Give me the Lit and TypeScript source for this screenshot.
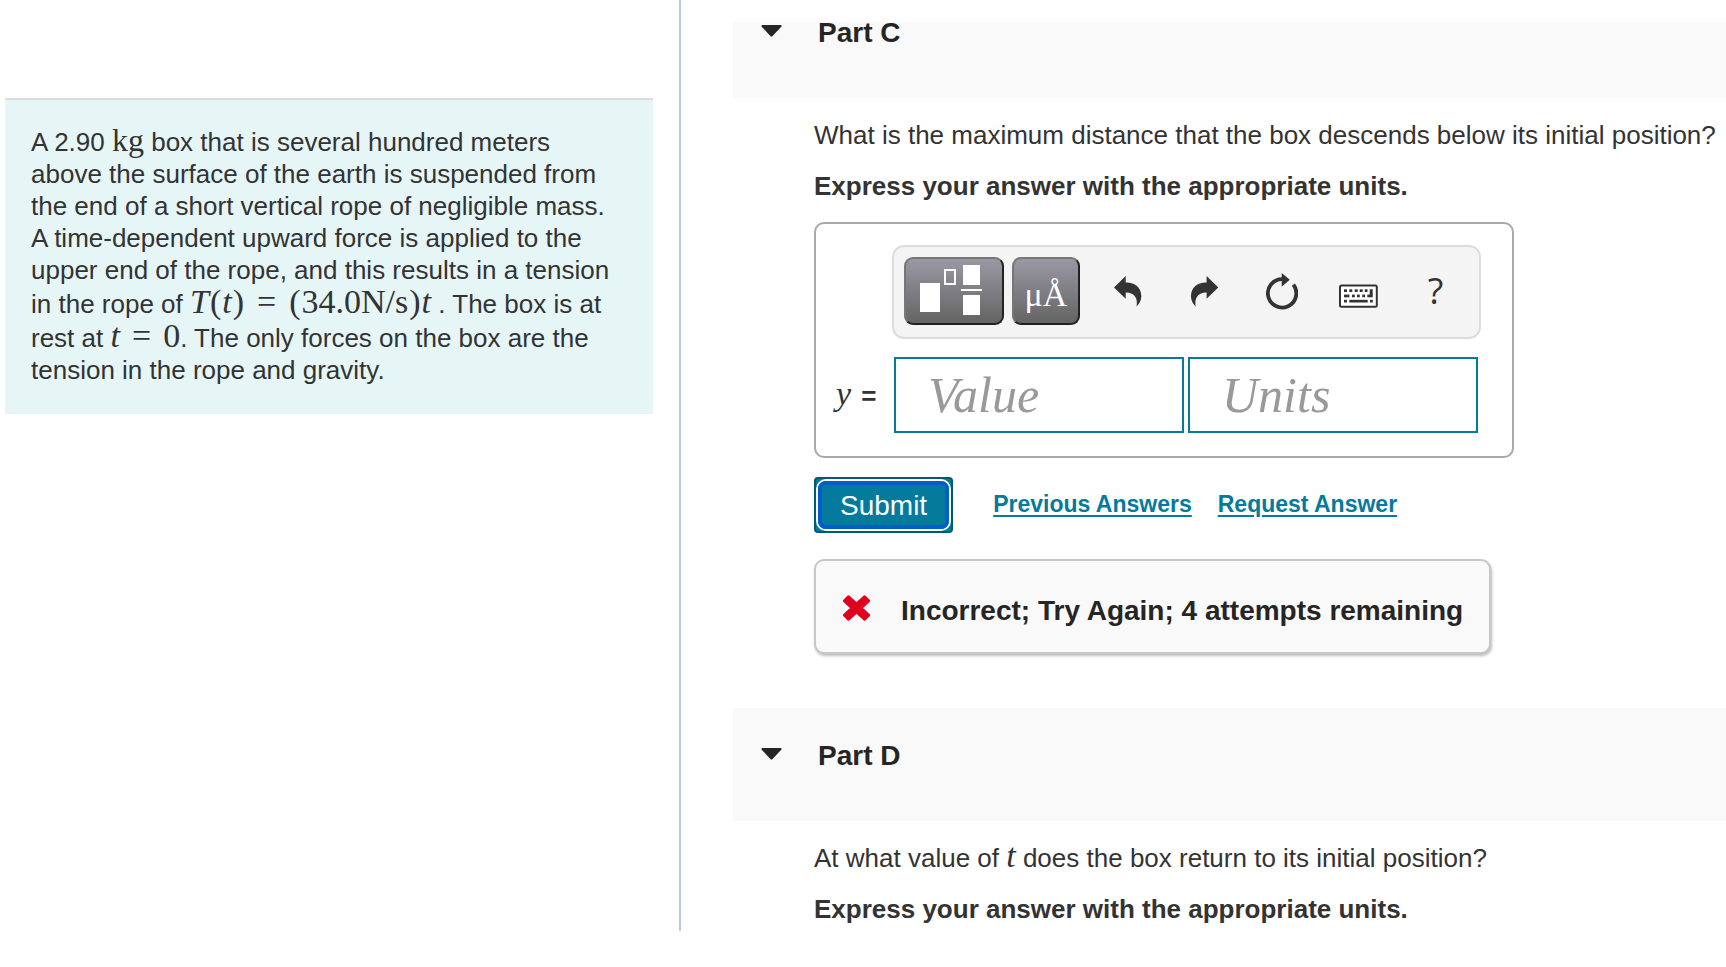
import { LitElement, html, css, svg } from "lit";
import { customElement, property } from "lit/decorators.js";

const undoIcon = html`<svg width="28" height="31" viewBox="0 0 28 31" aria-hidden="true">
  <path d="M0 11.5L11.7 0V6.5C20 6 27.3 11 27.3 20C27.3 25 25 28 22.5 30.5C24 23.5 21.5 16.5 11.7 16.5V22.8Z" />
</svg>`;

const redoIcon = html`<svg width="28" height="31" viewBox="0 0 28 31" aria-hidden="true">
  <path d="M27.3 11.5L15.6 0V6.5C7.3 6 0 11 0 20C0 25 2.3 28 4.8 30.5C3.3 23.5 5.8 16.5 15.6 16.5V22.8Z" />
</svg>`;

const resetIcon = html`<svg width="32" height="37" viewBox="0 0 32 37" aria-hidden="true">
  <path d="M27.4 11.7A14.2 14.2 0 1 1 16 6.1" fill="none" stroke="currentColor" stroke-width="3.8" />
  <path d="M15.7 0L23.8 6.8L15.7 13.7Z" />
</svg>`;

const keys: number[][] = [
  [5, 16.3, 3, 2.7], [10.3, 16.3, 3, 2.7], [15.7, 16.3, 3, 2.7], [20.7, 16.3, 3, 2.7], [25.7, 16.3, 2.8, 2.7],
  [5, 21.6, 5.4, 2.7], [13, 21.6, 2.8, 2.7], [18, 21.6, 2.8, 2.7], [23.3, 21.6, 2.8, 2.7], [28.3, 21.6, 5.4, 2.7],
  [30.7, 16.3, 3, 6],
  [5, 26.8, 3, 2.7], [10.3, 26.8, 18.4, 2.7], [31, 26.8, 2.8, 2.7],
];

const keyboardIcon = html`<svg width="39" height="36" viewBox="0 0 39 36" aria-hidden="true">
  <rect x="1" y="12.4" width="36.8" height="21.4" rx="1.5" fill="#fff" stroke="currentColor" stroke-width="2" />
  ${keys.map(([x, y, w, h]) => svg`<rect x=${x} y=${y} width=${w} height=${h} />`)}
</svg>`;

const templateIcon = html`<svg width="64" height="52" viewBox="0 0 64 52" aria-hidden="true">
  <rect x="1" y="18" width="20" height="29" />
  <rect x="26" y="5" width="10" height="14" fill="none" stroke="currentColor" stroke-width="2" />
  <rect x="44" y="0" width="17" height="20" />
  <rect x="42" y="24" width="21" height="2" />
  <rect x="44" y="30" width="17" height="20" />
</svg>`;

const wrongIcon = html`<svg width="28" height="26" viewBox="0 0 28 26" aria-hidden="true">
  <path d="M5.5 1.8L13.5 9L21.5 1.8L25.5 5.8L18 13L25.5 20.2L21.5 24.2L13.5 17L5.5 24.2L1.5 20.2L9 13L1.5 5.8Z"
    stroke="currentColor" stroke-width="3" stroke-linejoin="round" fill="currentColor" />
</svg>`;

@customElement("part-header")
class PartHeader extends LitElement {
  @property() label = "";

  static styles = css`
    :host { display: block; background: #f9f9f9; }
    h2 { margin: 0; font-size: 28px; line-height: 32px; font-weight: bold; }
    button {
      display: flex; align-items: center; gap: 36px; width: 100%; height: 113px;
      padding: 0 0 18px 28px; border: 0; background: none; color: #252525;
      font: inherit; text-align: left; cursor: pointer;
    }
    svg { fill: currentColor; margin-bottom: 3px; }
  `;

  render() {
    return html`<h2><button aria-expanded="true">
      <svg width="21" height="12" viewBox="0 0 21 12" aria-hidden="true">
        <path d="M1.2 0H19.8Q21.3 .6 20.2 1.8L11.6 11Q10.5 12 9.4 11L.8 1.8Q-.3 .6 1.2 0Z" />
      </svg>${this.label}</button></h2>`;
  }
}

@customElement("answer-editor")
class AnswerEditor extends LitElement {
  static styles = css`
    * { box-sizing: border-box; }
    :host {
      display: grid; grid-template-columns: 76px auto; width: fit-content; box-sizing: border-box;
      padding: 21px 31px 23px 0; border: 2px solid #a9a9a9; border-radius: 10px; row-gap: 18px;
    }
    button { cursor: pointer; }
    svg { fill: currentColor; display: block; }
    .tools {
      grid-column: 2; display: flex; align-items: center; height: 94px; padding: 0 6px 2px 10px;
      border: 2px solid #dcdcdc; border-radius: 12px; background: #f4f4f4;
    }
    .dark {
      display: flex; align-items: center; justify-content: center;
      height: 68px; width: 68px; margin-right: 8px; padding: 8px 0 0;
      border: 2px solid; border-color: #777 #222 #222 #777; border-radius: 9px;
      background: linear-gradient(#9a98a3, #646464); color: #fff;
      font: 34px/44px "Liberation Serif", serif;
    }
    .wide { width: 100px; padding: 0 7px 0 0; }
    .flat {
      display: flex; align-items: center; justify-content: center;
      width: 77px; height: 68px; padding: 0 0 0 2px; border: 0; background: none; color: #333;
      font: 36px/44px "Open Sans", sans-serif;
    }
    .name { align-self: center; padding-left: 20px; font: bold 26px/32px "Liberation Sans", sans-serif; color: #333; }
    .name i { margin-right: 3px; font: italic 34px/32px "Liberation Serif", serif; }
    .fields { display: flex; gap: 4px; padding-left: 2px; }
    input {
      width: 290px; height: 76px; padding: 0 0 0 32px; border: 2px solid #047a9c; border-radius: 0;
      background: #fff; color: #333; font: italic 50px/56px "Liberation Serif", serif;
    }
    input::placeholder { color: #999; opacity: 1; }
  `;

  render() {
    return html`
      <div class="tools" role="toolbar">
        <button class="dark wide" aria-label="Templates">${templateIcon}</button>
        <button class="dark" aria-label="Symbols">μÅ</button>
        <button class="flat" aria-label="Undo">${undoIcon}</button>
        <button class="flat" aria-label="Redo">${redoIcon}</button>
        <button class="flat" aria-label="Reset">${resetIcon}</button>
        <button class="flat" aria-label="Keyboard shortcuts">${keyboardIcon}</button>
        <button class="flat" aria-label="Help">?</button>
      </div>
      <label class="name" for="value"><i>y</i> =</label>
      <div class="fields">
        <input id="value" placeholder="Value" />
        <input aria-label="Units" placeholder="Units" />
      </div>`;
  }
}

@customElement("app-root")
class AppRoot extends LitElement {
  static styles = css`
    * { box-sizing: border-box; }
    :host {
      display: block; box-sizing: border-box; min-height: 100vh; padding-bottom: 36px; background: #fff; color: #333;
      font: 26px/32px "Liberation Sans", Arial, sans-serif;
    }
    .layout { display: grid; grid-template-columns: 679fr 1047fr; min-height: calc(100vh - 36px); }
    .problem { padding: 98px 26px 0 5px; }
    .statement { margin: 0; padding: 24px 26px 28px; border-top: 2px solid #dcdcdc; background: #e6f6f7; }
    .math { font: 34px/28px "Liberation Serif", serif; white-space: nowrap; }
    .statement .math { line-height: 32px; }
    .statement .unit { font-size: 32px; }
    .eq { margin: 0 12px; }
    .paren { margin: 0 1px; }
    .parts { border-left: 2px solid #b9cbdf; padding: 22px 0 0 52px; min-width: 0; }
    .scroll { overflow: hidden; }
    .first { margin-top: -37px; }
    .body { padding: 21px 0 0 81px; }
    p { margin: 0 0 19px; }
    .prompt { margin: 0; }
    answer-editor { margin-top: 20px; }
    .actions { display: flex; align-items: center; margin: 19px 0 26px; }
    .submit {
      height: 56px; padding: 2px; border: 2px solid #005a70; border-radius: 4px; background: #047a9c; color: #fff;
      font: 28px/38px "Liberation Sans", Arial, sans-serif; cursor: pointer;
    }
    .submit span {
      display: block; padding: 2px 18px 0; border: 4px solid #005dcc; border-radius: 8px; box-shadow: 0 0 0 2px #fff;
    }
    a {
      color: #047a9c; font-weight: bold; font-size: 23px; margin: 0 0 2px 26px;
      text-decoration-thickness: 2px; text-underline-offset: 3px;
    }
    .submit + a { margin-left: 40px; }
    .feedback {
      display: flex; align-items: center; gap: 30px; width: fit-content; height: 95px; margin-bottom: 54px;
      padding: 8px 26px 0 27px; border: 2px solid #c7c7c7; border-radius: 10px; background: #f9f9f9;
      box-shadow: 1px 2px 3px #bbb; color: #252525; font-size: 28px; font-weight: bold;
    }
    .feedback svg { color: #e0001f; margin-bottom: 6px; }
  `;

  render() {
    return html`
      <div class="layout">
        <section class="problem">
          <p class="statement">
            A 2.90 <span class="math unit">kg</span> box that is several hundred meters above the surface of the earth is
            suspended from the end of a short vertical rope of negligible mass. A time-dependent upward force is
            applied to the upper end of the rope, and this results in a tension in the rope of
            <span class="math"><i>T</i><span class="paren">(</span><i>t</i><span class="paren">)</span><span
              class="eq">=</span><span class="paren">(</span>34.0N/s<span class="paren">)</span><i>t</i></span> . The box is at
            rest at <span class="math"><i>t</i><span class="eq">=</span>0</span>. The only forces on the box are the
            tension in the rope and gravity.
          </p>
        </section>
        <main class="parts">
          <div class="scroll">
            <part-header class="first" label="Part C"></part-header>
            <div class="body">
              <p>What is the maximum distance that the box descends below its initial position?</p>
              <p class="prompt"><b>Express your answer with the appropriate units.</b></p>
              <answer-editor></answer-editor>
              <div class="actions">
                <button class="submit"><span>Submit</span></button>
                <a href="#previous">Previous Answers</a>
                <a href="#request">Request Answer</a>
              </div>
              <div class="feedback" role="status">${wrongIcon}<span>Incorrect; Try Again; 4 attempts remaining</span></div>
            </div>
            <part-header label="Part D"></part-header>
            <div class="body">
              <p>At what value of <span class="math"><i>t</i></span> does the box return to its initial position?</p>
              <p class="prompt"><b>Express your answer with the appropriate units.</b></p>
            </div>
          </div>
        </main>
      </div>`;
  }
}
